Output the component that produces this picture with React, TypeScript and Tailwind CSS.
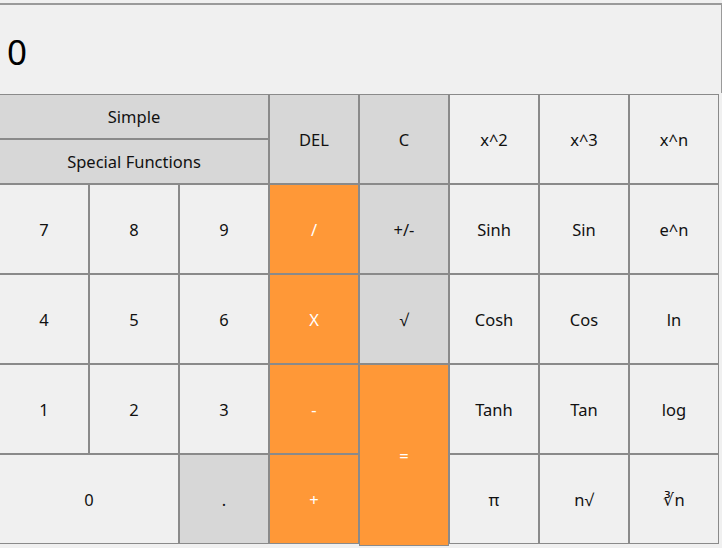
import React from "react";

type Kind = "light" | "gray" | "orange";

const kindCls: Record<Kind, string> = {
  light: "bg-[#f0f0f0] text-[#111]",
  gray: "bg-[#d7d7d7] text-[#111]",
  orange: "bg-[#ff9837] text-white",
};

function Btn({
  label,
  kind = "light",
  className = "",
}: {
  label: string;
  kind?: Kind;
  className?: string;
}) {
  return (
    <div
      className={`flex items-center justify-center pt-[2px] border border-[#8a8a8a] text-[16.5px] ${kindCls[kind]} ${className}`}
    >
      {label}
    </div>
  );
}

export default function App() {
  return (
    <div
      className="w-[722px] h-[548px] bg-[#f0f0f0] overflow-hidden relative"
      style={{ fontFamily: '"Noto Sans", "Open Sans", sans-serif' }}
    >
      <div className="mt-[3px] h-[90px] w-[722px] border-t-2 border-r border-[#9a9a9a] flex items-center pl-[7px] pt-[4px]">
        <span className="text-[35px] text-black leading-none">0</span>
      </div>
      <div className="mt-[1px] ml-[-1px] grid grid-cols-[repeat(8,90px)] grid-rows-[repeat(5,90px)]">
        <div className="col-span-3 flex flex-col">
          <Btn label="Simple" kind="gray" className="h-[45px]" />
          <Btn label="Special Functions" kind="gray" className="h-[45px]" />
        </div>
        <Btn label="DEL" kind="gray" />
        <Btn label="C" kind="gray" />
        <Btn label="x^2" />
        <Btn label="x^3" />
        <Btn label="x^n" />

        <Btn label="7" />
        <Btn label="8" />
        <Btn label="9" />
        <Btn label="/" kind="orange" />
        <Btn label="+/-" kind="gray" />
        <Btn label="Sinh" />
        <Btn label="Sin" />
        <Btn label="e^n" />

        <Btn label="4" />
        <Btn label="5" />
        <Btn label="6" />
        <Btn label="X" kind="orange" />
        <Btn label="√" kind="gray" />
        <Btn label="Cosh" />
        <Btn label="Cos" />
        <Btn label="ln" />

        <Btn label="1" />
        <Btn label="2" />
        <Btn label="3" />
        <Btn label="-" kind="orange" />
        <Btn label="=" kind="orange" className="row-span-2 mb-[-2px]" />
        <Btn label="Tanh" />
        <Btn label="Tan" />
        <Btn label="log" />

        <Btn label="0" className="col-span-2" />
        <Btn label="." kind="gray" />
        <Btn label="+" kind="orange" />
        <Btn label="π" />
        <Btn label="n√" />
        <Btn label="∛n" />
      </div>
    </div>
  );
}
